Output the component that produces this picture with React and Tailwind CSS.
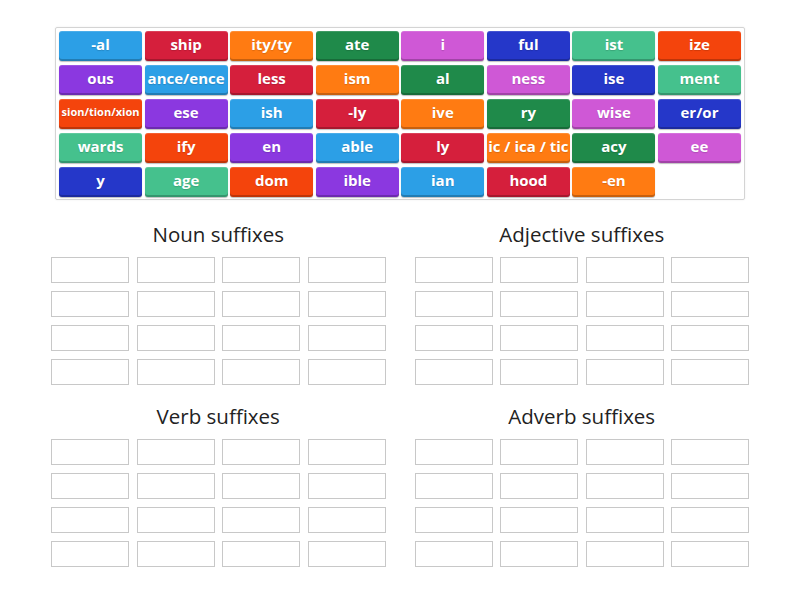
import React from "react";

const C = {
  sky: "bg-[#2c9fe6]",
  red: "bg-[#d51f3c]",
  orange: "bg-[#ff7b12]",
  dgreen: "bg-[#1f8a4a]",
  pink: "bg-[#cf58d6]",
  dblue: "bg-[#2537c9]",
  teal: "bg-[#45c18d]",
  redor: "bg-[#f4440c]",
  purple: "bg-[#8b38e0]",
};

const tiles = [
  ["-al", "sky"], ["ship", "red"], ["ity/ty", "orange"], ["ate", "dgreen"], ["i", "pink"], ["ful", "dblue"], ["ist", "teal"], ["ize", "redor"],
  ["ous", "purple"], ["ance/ence", "sky"], ["less", "red"], ["ism", "orange"], ["al", "dgreen"], ["ness", "pink"], ["ise", "dblue"], ["ment", "teal"],
  ["sion/tion/xion", "redor"], ["ese", "purple"], ["ish", "sky"], ["-ly", "red"], ["ive", "orange"], ["ry", "dgreen"], ["wise", "pink"], ["er/or", "dblue"],
  ["wards", "teal"], ["ify", "redor"], ["en", "purple"], ["able", "sky"], ["ly", "red"], ["ic / ica / tic", "orange"], ["acy", "dgreen"], ["ee", "pink"],
  ["y", "dblue"], ["age", "teal"], ["dom", "redor"], ["ible", "purple"], ["ian", "sky"], ["hood", "red"], ["-en", "orange"],
];

function Tile({ text, color }) {
  const small = text === "sion/tion/xion";
  return (
    <div
      className={`${C[color]} h-[30px] pb-[4px] rounded-[3px] flex items-center justify-center text-white font-bold whitespace-nowrap overflow-hidden shadow-[inset_0_-2px_0_rgba(0,0,0,0.22),inset_0_1px_0_rgba(255,255,255,0.15),0_1px_1px_rgba(0,0,0,0.25)] ${small ? "text-[11px]" : "text-[15px]"}`}
      style={{ textShadow: "0 1px 1px rgba(0,0,0,0.15)" }}
    >
      {text}
    </div>
  );
}

function Group({ title, className = "" }) {
  return (
    <div className={`flex flex-col ${className}`}>
      <div className="text-[20.5px] leading-[27px] text-[#222] text-center mb-[9px]">{title}</div>
      <div className="grid grid-cols-4 gap-x-[7.5px] gap-y-[8px]">
        {Array.from({ length: 16 }).map((_, i) => (
          <div key={i} className="h-[26px] border border-[#c8c8c8] bg-white" />
        ))}
      </div>
    </div>
  );
}

export default function App() {
  return (
    <div className="w-[800px] h-[600px] bg-white overflow-hidden" style={{ fontFamily: '"Open Sans", "Noto Sans", sans-serif' }}>
      <div className="ml-[55px] mt-[27px] w-[690px] border border-[#d4d4d4] rounded-[2px] pt-[3px] pb-[2px] px-[3px] shadow-[0_0_2px_rgba(0,0,0,0.08)]">
        <div className="grid grid-cols-8 gap-x-[2.5px] gap-y-[4px]">
          {tiles.map(([t, c], i) => (
            <Tile key={i} text={t} color={c} />
          ))}
        </div>
      </div>
      <div className="ml-[51px] w-[698px] mt-[21px] grid grid-cols-2 gap-x-[29px] gap-y-[18px]">
        <Group title="Noun suffixes" />
        <Group title="Adjective suffixes" />
        <Group title="Verb suffixes" />
        <Group title="Adverb suffixes" />
      </div>
    </div>
  );
}
